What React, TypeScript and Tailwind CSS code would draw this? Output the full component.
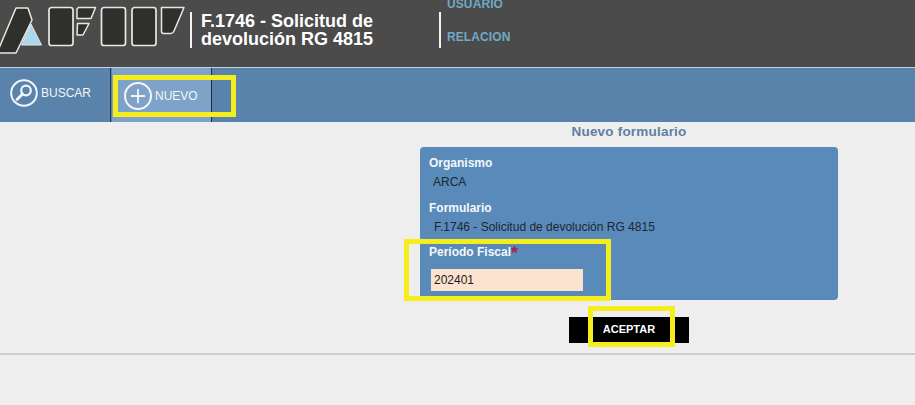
import { Plus } from "lucide-react";

// AFIP logo: outlined dark blocks plus the pale blue triangle
function Logo() {
  const stroke = "#e8e8e4";
  const fill = "#2f302c";
  return (
    <svg width="190" height="67" viewBox="0 0 190 67" className="shrink-0">
      <path d="M-3 53 L16 8 H28 L32 20 L16 53 Z" fill={fill} stroke={stroke} strokeWidth="1.5" strokeLinejoin="round" />
      <path d="M31 24 L41.5 45 H21.5 Z" fill="#a9d8ea" stroke={stroke} strokeWidth="1" strokeLinejoin="round" />
      <rect x="49" y="7.5" width="24" height="38" rx="2.5" fill={fill} stroke={stroke} strokeWidth="1.7" />
      <path d="M78.5 7.5 H95.5 L91 18.5 H77 V9 Z" fill={fill} stroke={stroke} strokeWidth="1.5" strokeLinejoin="round" />
      <path d="M77.5 23.5 H89 L83 35 H77 Z" fill={fill} stroke={stroke} strokeWidth="1.5" strokeLinejoin="round" />
      <rect x="101.5" y="7.5" width="24" height="38" rx="2.5" fill={fill} stroke={stroke} strokeWidth="1.7" />
      <rect x="132" y="7.5" width="24" height="38" rx="2.5" fill={fill} stroke={stroke} strokeWidth="1.7" />
      <path d="M161.5 7.5 H184 L174 31 Q173 33.5 171 33.5 H163.5 Q161.5 33.5 161.5 31 Z" fill={fill} stroke={stroke} strokeWidth="1.5" strokeLinejoin="round" />
    </svg>
  );
}

function SearchCircle() {
  return (
    <svg width="28" height="28" viewBox="0 0 28 28" fill="none" stroke="#f0f6fa" className="shrink-0">
      <circle cx="14" cy="14" r="12.8" strokeWidth="2" />
      <circle cx="16" cy="11.5" r="4.8" strokeWidth="2.2" />
      <path d="M12.5 15 L7 20.5" strokeWidth="2.8" strokeLinecap="round" />
    </svg>
  );
}

function Highlight({ className }: { className: string }) {
  return <div className={`absolute pointer-events-none border-[#f6ee1c] ${className}`} />;
}

export default function App() {
  return (
    <div className="relative h-[405px] w-[915px] overflow-hidden bg-[#eeeeee] font-['Liberation_Sans',Arial,sans-serif]">
      {/* Header */}
      <header className="flex h-[67px] bg-[#4b4b4b]">
        <Logo />
        <div className="mt-3 h-9 w-0.5 shrink-0 bg-[#f2f2f2]" />
        <h1 className="ml-[9px] mt-[12px] w-[238px] text-[18px] font-bold leading-[18px] text-white">
          F.1746 - Solicitud de devolución RG 4815
        </h1>
        <div className="mt-3 h-9 w-0.5 shrink-0 bg-[#f2f2f2]" />
        <div className="ml-[6px] -mt-[2px] flex flex-col gap-[21px] text-xs font-bold leading-[12px] tracking-[0.1px] text-[#6fa9c6]">
          <span>USUARIO</span>
          <span>RELACION</span>
        </div>
      </header>

      {/* Nav */}
      <nav className="flex h-[55px] border-t border-[#c3d3df] bg-[#5a83ab]">
        <button className="flex w-[110px] items-center gap-[3px] pl-2.5 pb-1 text-xs text-[#f2f6f9]">
          <SearchCircle />
          BUSCAR
        </button>
        <div className="w-px bg-[#27384a]" />
        <button className="ml-px flex w-[99px] items-center gap-[3px] bg-[#7ea2c8] pl-[12px] pt-px text-xs text-[#f2f6f9]">
          <span className="flex h-[28px] w-[28px] shrink-0 items-center justify-center rounded-full border-2 border-[#f2f6f9]">
            <Plus size={22} strokeWidth={2} />
          </span>
          NUEVO
        </button>
        <div className="w-px bg-[#1c2b3b]" />
      </nav>

      {/* Form */}
      <main className="flex flex-col items-center pl-[343px] pt-[1.5px]">
        <h2 className="text-[13.5px] font-bold leading-[15px] text-[#5e80a4] tracking-[0.2px]">Nuevo formulario</h2>
      </main>
      <section className="ml-[420px] mt-[8px] h-[153px] w-[418px] rounded-[4px] bg-[#5a8ab9] px-[9px] pt-[9px] text-xs">
        <p className="font-bold leading-[14px] text-[#f4f8fb]">Organismo</p>
        <p className="ml-1 mt-[5px] leading-[14px] text-[#1b2733]">ARCA</p>
        <p className="mt-[12px] font-bold leading-[14px] text-[#f4f8fb]">Formulario</p>
        <p className="ml-[5px] mt-[5px] leading-[14px] text-[#1b2733]">F.1746 - Solicitud de devolución RG 4815</p>
        <p className="mt-[11px] font-bold leading-[14px] text-[#f4f8fb]">
          Período Fiscal<span className="align-[-3px] text-[18px] leading-[14px] text-[#a5234f]">*</span>
        </p>
        <input
          readOnly
          value="202401"
          className="ml-[2px] mt-[9px] block h-[22px] w-[152px] bg-[#fbe3d0] px-[3px] text-xs text-[#1c1c1c] outline-none"
        />
      </section>

      <div className="ml-[569px] mt-[17px] flex h-[26px] w-[120px] items-center justify-center bg-black text-[11px] font-bold text-white">
        ACEPTAR
      </div>
      <hr className="mt-[10px] border-0 border-t-2 border-[#cdcdcd]" />

      {/* Yellow annotations over the screenshot */}
      <Highlight className="left-[113px] top-[75px] h-[42px] w-[123px] border-[5px]" />
      <Highlight className="left-[404px] top-[239px] h-[62px] w-[207px] border-[5px]" />
      <Highlight className="left-[588px] top-[306px] h-[41px] w-[87px] border-[5px]" />
    </div>
  );
}
